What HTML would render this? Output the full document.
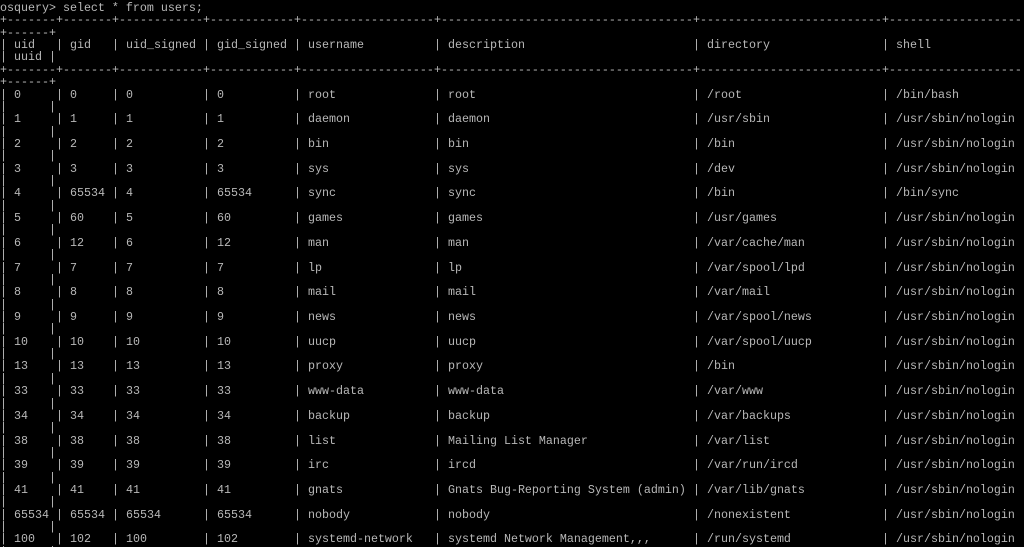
<!DOCTYPE html>
<html><head><meta charset="utf-8">
<style>
html,body{margin:0;padding:0;background:#000;width:1024px;height:547px;overflow:hidden}
#t{padding-top:2px;font-family:"Liberation Mono","Courier New",monospace;font-size:11.667px;line-height:12.36px;color:#b8b8b8}
.l{height:12.36px;overflow:hidden;white-space:pre}
.l span{display:inline-block;overflow:hidden;white-space:pre;vertical-align:top}
.a{width:56px}.b{width:91px}.c{width:140px}.d{width:259px}.e{width:189px}.f{width:140px}
</style></head><body><div id="t"><div class="l">osquery&gt; select * from users;</div><div class="l"><span class="a">+----------------------------------------</span><span class="a">+----------------------------------------</span><span class="b">+----------------------------------------</span><span class="b">+----------------------------------------</span><span class="c">+----------------------------------------</span><span class="d">+----------------------------------------</span><span class="e">+----------------------------------------</span><span class="f">+----------------------------------------</span></div><div class="l">+------+</div><div class="l"><span class="a">| uid</span><span class="a">| gid</span><span class="b">| uid_signed</span><span class="b">| gid_signed</span><span class="c">| username</span><span class="d">| description</span><span class="e">| directory</span><span class="f">| shell</span></div><div class="l">| uuid |</div><div class="l"><span class="a">+----------------------------------------</span><span class="a">+----------------------------------------</span><span class="b">+----------------------------------------</span><span class="b">+----------------------------------------</span><span class="c">+----------------------------------------</span><span class="d">+----------------------------------------</span><span class="e">+----------------------------------------</span><span class="f">+----------------------------------------</span></div><div class="l">+------+</div>
<div class="l"><span class="a">| 0</span><span class="a">| 0</span><span class="b">| 0</span><span class="b">| 0</span><span class="c">| root</span><span class="d">| root</span><span class="e">| /root</span><span class="f">| /bin/bash</span></div>
<div class="l">|      |</div>
<div class="l"><span class="a">| 1</span><span class="a">| 1</span><span class="b">| 1</span><span class="b">| 1</span><span class="c">| daemon</span><span class="d">| daemon</span><span class="e">| /usr/sbin</span><span class="f">| /usr/sbin/nologin</span></div>
<div class="l">|      |</div>
<div class="l"><span class="a">| 2</span><span class="a">| 2</span><span class="b">| 2</span><span class="b">| 2</span><span class="c">| bin</span><span class="d">| bin</span><span class="e">| /bin</span><span class="f">| /usr/sbin/nologin</span></div>
<div class="l">|      |</div>
<div class="l"><span class="a">| 3</span><span class="a">| 3</span><span class="b">| 3</span><span class="b">| 3</span><span class="c">| sys</span><span class="d">| sys</span><span class="e">| /dev</span><span class="f">| /usr/sbin/nologin</span></div>
<div class="l">|      |</div>
<div class="l"><span class="a">| 4</span><span class="a">| 65534</span><span class="b">| 4</span><span class="b">| 65534</span><span class="c">| sync</span><span class="d">| sync</span><span class="e">| /bin</span><span class="f">| /bin/sync</span></div>
<div class="l">|      |</div>
<div class="l"><span class="a">| 5</span><span class="a">| 60</span><span class="b">| 5</span><span class="b">| 60</span><span class="c">| games</span><span class="d">| games</span><span class="e">| /usr/games</span><span class="f">| /usr/sbin/nologin</span></div>
<div class="l">|      |</div>
<div class="l"><span class="a">| 6</span><span class="a">| 12</span><span class="b">| 6</span><span class="b">| 12</span><span class="c">| man</span><span class="d">| man</span><span class="e">| /var/cache/man</span><span class="f">| /usr/sbin/nologin</span></div>
<div class="l">|      |</div>
<div class="l"><span class="a">| 7</span><span class="a">| 7</span><span class="b">| 7</span><span class="b">| 7</span><span class="c">| lp</span><span class="d">| lp</span><span class="e">| /var/spool/lpd</span><span class="f">| /usr/sbin/nologin</span></div>
<div class="l">|      |</div>
<div class="l"><span class="a">| 8</span><span class="a">| 8</span><span class="b">| 8</span><span class="b">| 8</span><span class="c">| mail</span><span class="d">| mail</span><span class="e">| /var/mail</span><span class="f">| /usr/sbin/nologin</span></div>
<div class="l">|      |</div>
<div class="l"><span class="a">| 9</span><span class="a">| 9</span><span class="b">| 9</span><span class="b">| 9</span><span class="c">| news</span><span class="d">| news</span><span class="e">| /var/spool/news</span><span class="f">| /usr/sbin/nologin</span></div>
<div class="l">|      |</div>
<div class="l"><span class="a">| 10</span><span class="a">| 10</span><span class="b">| 10</span><span class="b">| 10</span><span class="c">| uucp</span><span class="d">| uucp</span><span class="e">| /var/spool/uucp</span><span class="f">| /usr/sbin/nologin</span></div>
<div class="l">|      |</div>
<div class="l"><span class="a">| 13</span><span class="a">| 13</span><span class="b">| 13</span><span class="b">| 13</span><span class="c">| proxy</span><span class="d">| proxy</span><span class="e">| /bin</span><span class="f">| /usr/sbin/nologin</span></div>
<div class="l">|      |</div>
<div class="l"><span class="a">| 33</span><span class="a">| 33</span><span class="b">| 33</span><span class="b">| 33</span><span class="c">| www-data</span><span class="d">| www-data</span><span class="e">| /var/www</span><span class="f">| /usr/sbin/nologin</span></div>
<div class="l">|      |</div>
<div class="l"><span class="a">| 34</span><span class="a">| 34</span><span class="b">| 34</span><span class="b">| 34</span><span class="c">| backup</span><span class="d">| backup</span><span class="e">| /var/backups</span><span class="f">| /usr/sbin/nologin</span></div>
<div class="l">|      |</div>
<div class="l"><span class="a">| 38</span><span class="a">| 38</span><span class="b">| 38</span><span class="b">| 38</span><span class="c">| list</span><span class="d">| Mailing List Manager</span><span class="e">| /var/list</span><span class="f">| /usr/sbin/nologin</span></div>
<div class="l">|      |</div>
<div class="l"><span class="a">| 39</span><span class="a">| 39</span><span class="b">| 39</span><span class="b">| 39</span><span class="c">| irc</span><span class="d">| ircd</span><span class="e">| /var/run/ircd</span><span class="f">| /usr/sbin/nologin</span></div>
<div class="l">|      |</div>
<div class="l"><span class="a">| 41</span><span class="a">| 41</span><span class="b">| 41</span><span class="b">| 41</span><span class="c">| gnats</span><span class="d">| Gnats Bug-Reporting System (admin)</span><span class="e">| /var/lib/gnats</span><span class="f">| /usr/sbin/nologin</span></div>
<div class="l">|      |</div>
<div class="l"><span class="a">| 65534</span><span class="a">| 65534</span><span class="b">| 65534</span><span class="b">| 65534</span><span class="c">| nobody</span><span class="d">| nobody</span><span class="e">| /nonexistent</span><span class="f">| /usr/sbin/nologin</span></div>
<div class="l">|      |</div>
<div class="l"><span class="a">| 100</span><span class="a">| 102</span><span class="b">| 100</span><span class="b">| 102</span><span class="c">| systemd-network</span><span class="d">| systemd Network Management,,,</span><span class="e">| /run/systemd</span><span class="f">| /usr/sbin/nologin</span></div>
<div class="l">|      |</div>
</div></body></html>
